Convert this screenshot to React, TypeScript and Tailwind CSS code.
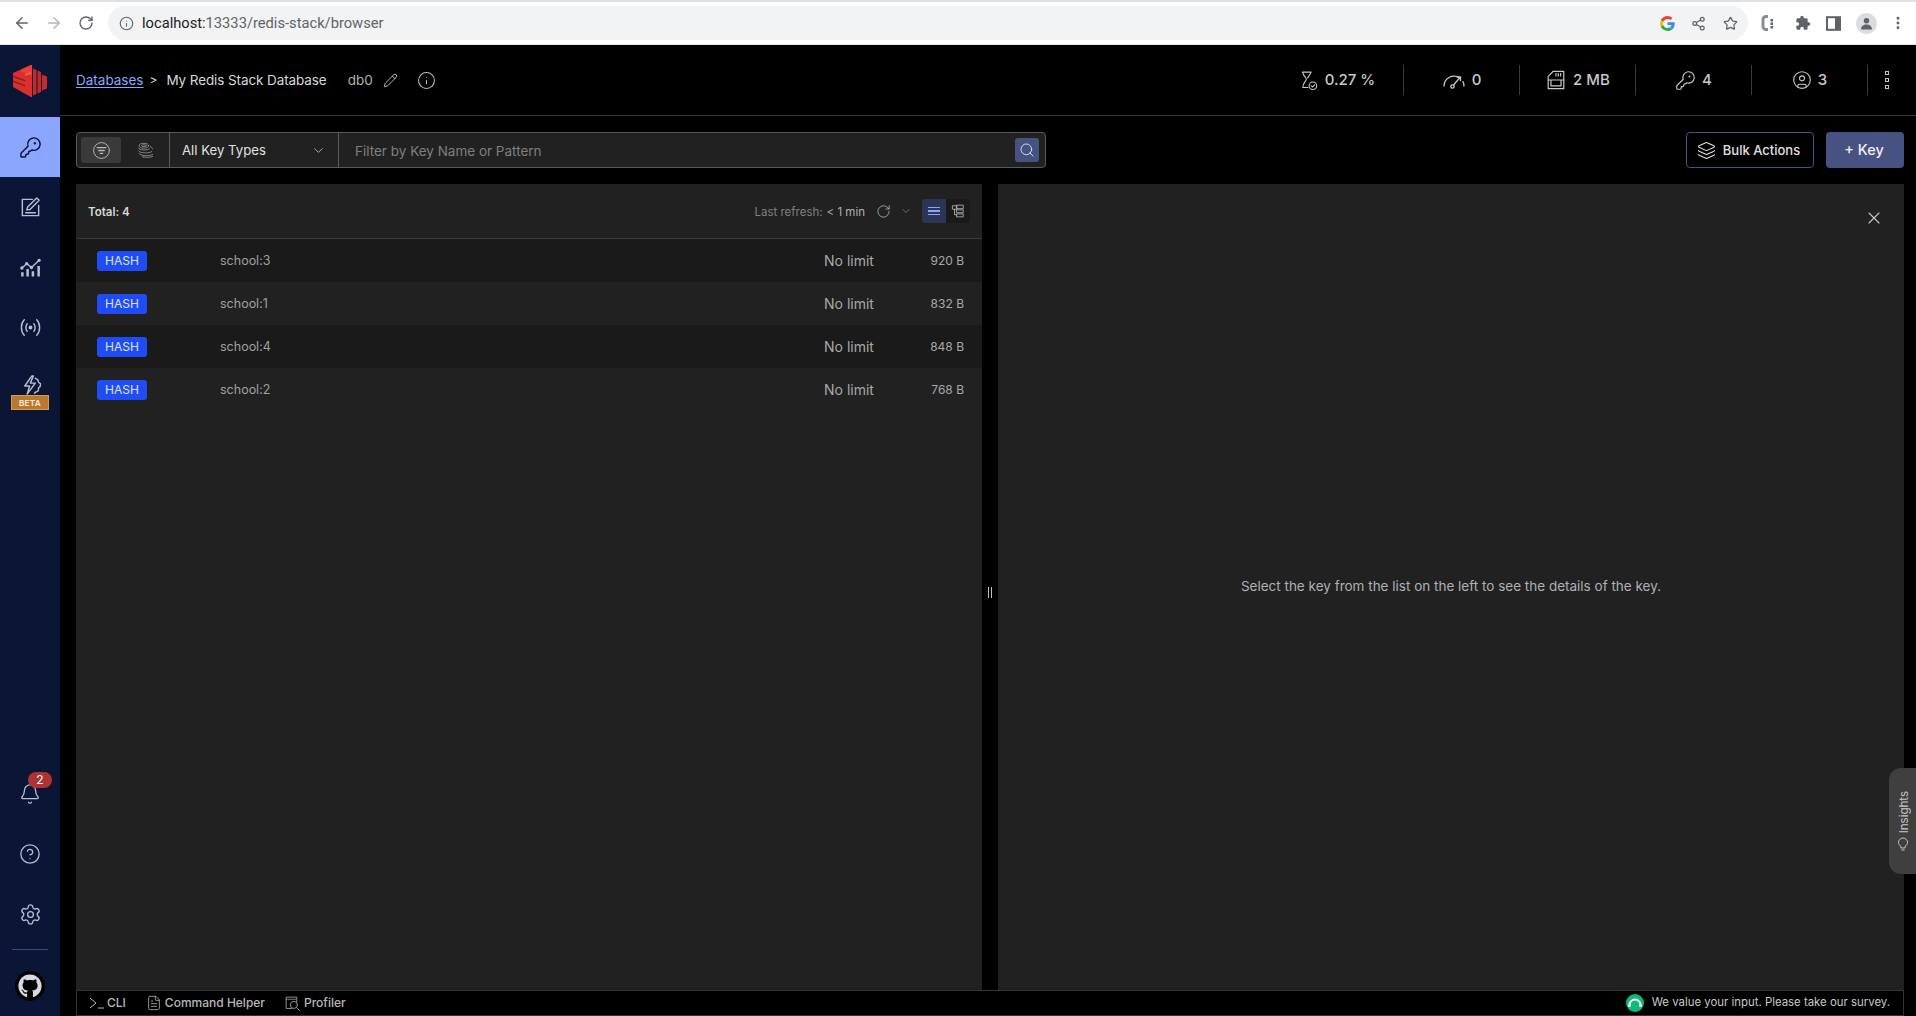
import React from 'react';
import { ArrowLeft, ArrowRight, RotateCw, Info, Share2, Star, EllipsisVertical, KeyRound, Bell, CircleHelp, Settings, Layers, Search, ChevronDown, X, FileText, CircleUser, Pencil } from 'lucide-react';
import { FaGithub } from 'react-icons/fa';

function Ico({ s = 20, children, className = '' }: { s?: number; children: React.ReactNode; className?: string }) {
  return (
    <svg width={s} height={s} viewBox="0 0 24 24" fill="none" stroke="currentColor" strokeWidth={1.5} strokeLinecap="round" strokeLinejoin="round" className={className}>
      {children}
    </svg>
  );
}

function RedisLogo() {
  return (
    <svg width="34" height="32" viewBox="0 0 34 32">
      <polygon points="0,8 18,0 19,0 19,32 18,32 0,22" fill="#d9302f" />
      <polygon points="8,4.500 18,0 19,0 19,11 8,6.500" fill="#e8403c" />
      <polygon points="20,3.500 23.500,5 23.500,29 20,30.500" fill="#c62b2b" />
      <polygon points="24.500,5.500 28,7 28,27 24.500,28.500" fill="#c62b2b" />
      <polygon points="29,9.500 34,11.500 34,23.500 29,25.500" fill="#c62b2b" />
      <polygon points="0,10.500 12,15 12,16.500 0,12" fill="#8a1c1e" />
      <polygon points="0,15.500 12,20 12,21.500 0,17" fill="#8a1c1e" />
      <polygon points="12,9.500 18,7 18,8.500 12,11" fill="#f0605a" />
    </svg>
  );
}

function GoogleG() {
  return (
    <svg width="15" height="15" viewBox="0 0 48 48">
      <path fill="#EA4335" d="M24 9.5c3.54 0 6.71 1.22 9.21 3.6l6.85-6.85C35.9 2.38 30.47 0 24 0 14.62 0 6.51 5.38 2.56 13.22l7.98 6.19C12.43 13.72 17.74 9.5 24 9.5z" />
      <path fill="#4285F4" d="M46.98 24.55c0-1.57-.15-3.09-.38-4.55H24v9.02h12.94c-.58 2.96-2.26 5.48-4.78 7.18l7.73 6c4.51-4.18 7.09-10.36 7.09-17.65z" />
      <path fill="#FBBC05" d="M10.53 28.59c-.48-1.45-.76-2.99-.76-4.59s.27-3.14.76-4.59l-7.98-6.19C.92 16.46 0 20.12 0 24c0 3.88.92 7.54 2.56 10.78l7.97-6.19z" />
      <path fill="#34A853" d="M24 48c6.48 0 11.93-2.13 15.89-5.81l-7.73-6c-2.15 1.45-4.92 2.3-8.16 2.3-6.26 0-11.57-4.22-13.47-9.91l-7.98 6.19C6.51 42.62 14.62 48 24 48z" />
    </svg>
  );
}

function Chrome() {
  return (
    <div className="h-[45px] shrink-0 bg-white border-t-2 border-b border-t-[#dee1e6] border-b-[#e5e5e5] flex items-center pl-[13px] pr-[10px] text-[#5f6368] font-['Roboto',sans-serif]">
      <ArrowLeft size={18} strokeWidth={2} />
      <ArrowRight size={18} strokeWidth={2} className="ml-[14px] text-[#b4b6b9]" />
      <RotateCw size={16} strokeWidth={2} className="ml-[15px]" />
      <div className="ml-[14px] h-[34px] w-[1640px] rounded-full bg-[#f1f3f4] flex items-center pl-[11px] pr-[10px]">
        <Info size={15} strokeWidth={1.8} />
        <div className="ml-[8px] text-[14.700px] text-[#5f6368]"><span className="text-[#202124]">localhost:</span>13333/redis-stack/browser</div>
        <div className="flex-1" />
        <GoogleG />
        <Share2 size={15} strokeWidth={2} className="ml-[16px]" />
        <Star size={15} strokeWidth={2} className="ml-[17px]" />
      </div>
      <svg width="14" height="18" viewBox="0 0 14 18" className="ml-[12px]" fill="none">
        <path d="M8 2.500H6a3 3 0 0 0-3 3v7a3 3 0 0 0 3 3h2" stroke="#8a8d91" strokeWidth="3" />
        <rect x="10.500" y="5" width="2.500" height="2.500" fill="#5f6368" />
        <rect x="10.500" y="8.500" width="2.500" height="2.500" fill="#5f6368" />
        <rect x="10.500" y="12" width="2.500" height="2.500" fill="#5f6368" />
      </svg>
      <svg width="16" height="16" viewBox="0 0 24 24" className="ml-[21px]" fill="#5f6368"><path d="M20.5 11H19V7a2 2 0 0 0-2-2h-4V3.5a2.5 2.5 0 0 0-5 0V5H4a2 2 0 0 0-2 2v3.8h1.5a2.7 2.7 0 0 1 0 5.4H2V20a2 2 0 0 0 2 2h3.8v-1.5a2.7 2.7 0 0 1 5.4 0V22H17a2 2 0 0 0 2-2v-4h1.5a2.5 2.5 0 0 0 0-5z" /></svg>
      <svg width="15" height="15" viewBox="0 0 15 15" className="ml-[15px]"><rect x="1" y="1.2" width="13" height="12.6" fill="none" stroke="#5f6368" strokeWidth="2" /><rect x="9" y="1" width="5" height="13" fill="#5f6368" /></svg>
      <div className="ml-[15px] w-[21px] h-[21px] rounded-full bg-[#dadce0] flex items-center justify-center">
        <svg width="13" height="13" viewBox="0 0 24 24" fill="#5f6368"><circle cx="12" cy="7" r="5" /><path d="M2 23c0-6 4-9 10-9s10 3 10 9z" /></svg>
      </div>
      <EllipsisVertical size={16} strokeWidth={2.4} className="ml-[13px]" />
    </div>
  );
}

const navCls = 'h-[60px] w-[60px] flex items-center justify-center text-[#b9bfd2]';

function Sidebar() {
  return (
    <div className="w-[60px] shrink-0 bg-[#0b1536] flex flex-col">
      <div className="h-[72px] flex items-center justify-center"><RedisLogo /></div>
      <div className="h-[60px] w-[60px] bg-[#8ba6ff] flex items-center justify-center text-[#0b1536]">
        <KeyRound size={23} strokeWidth={1.5} />
      </div>
      <div className={navCls}>
        <Ico s={23}>
          <path d="M20.500 10v10.500h-17v-17H14" />
          <path d="M8 14.500l1-3L18.500 2l2.500 2.500-9.500 9.500z" />
          <path d="M7 17.500h10" />
        </Ico>
      </div>
      <div className={navCls}>
        <Ico s={23}>
          <path d="M3 12.500l5-4.500 5 4L21 4.500" />
          <circle cx="3" cy="12.500" r="1" fill="currentColor" />
          <circle cx="8" cy="8" r="1" fill="currentColor" />
          <circle cx="13" cy="12" r="1" fill="currentColor" />
          <circle cx="21" cy="4.500" r="1" fill="currentColor" />
          <path d="M3.500 17v4.500M9 13.500v8M14.500 16v5.500M20.500 10.500v11" strokeWidth={2.600} strokeLinecap="butt" />
        </Ico>
      </div>
      <div className={navCls}>
        <Ico s={23}>
          <circle cx="12" cy="12" r="1.300" fill="currentColor" />
          <path d="M5.500 4C1.500 8 1.500 16 5.500 20M18.500 4C22.500 8 22.500 16 18.500 20" />
          <path d="M8.500 8C6.800 10 6.800 14 8.500 16M15.500 8C17.200 10 17.200 14 15.500 16" />
        </Ico>
      </div>
      <div className={`${navCls} relative`}>
        <Ico s={23} className="-mt-[3px]">
          <path d="M13.500 2L6 12.500h5L8.500 21 17 9.500h-5.200L15 2z" />
          <path d="M17 4.500l2.500 1.200 1 3 2 1.500-.5 3-1.600 1.500-.4 3-2.500 1.200-2 1.600" strokeDasharray="2 1.200" />
        </Ico>
        <div className="absolute left-[11px] top-[38px] w-[38px] h-[15px] bg-[#b87a30] border border-[#dd9a45] flex items-center justify-center text-[8px] font-bold text-[#f5e6d0] tracking-[0.3px]">BETA</div>
      </div>
      <div className="flex-1" />
      <div className={`${navCls} relative`}>
        <Bell size={22} strokeWidth={1.4} />
        <div className="absolute left-[28px] top-[8px] w-[24px] h-[16px] rounded-full bg-[#b03232] text-white text-[12px] leading-[16px] text-center">2</div>
      </div>
      <div className={navCls}><CircleHelp size={22} strokeWidth={1.4} /></div>
      <div className={navCls}><Settings size={23} strokeWidth={1.4} /></div>
      <div className="mx-[12px] mt-[5px] h-px bg-[#3b4a7a]" />
      <div className="mt-[21px] mb-[15px] mx-[15px] w-[30px] h-[30px] rounded-full bg-black flex items-center justify-center text-[#d5d9e5]">
        <FaGithub size={24} />
      </div>
    </div>
  );
}

function Stat({ icon, text, w = 'w-[116px]' }: { icon: React.ReactNode; text: string; w?: string }) {
  return (
    <div className={`${w} h-[30px] border-r border-[#3a3a3a] flex items-center justify-center gap-[6px] text-[#c8c8c8] text-[15px] font-medium`}>
      {icon}
      <span>{text}</span>
    </div>
  );
}

function Header() {
  return (
    <div className="h-[71px] shrink-0 border-b border-[#3a3a3a] flex items-center pl-[16px] text-[13.500px] text-[#d8d8d8]">
      <span className="text-[#8ba6ff] underline underline-offset-2">Databases</span>
      <span className="ml-[6px] text-[12px]">&gt;</span>
      <span className="ml-[9px] tracking-[-0.1px]">My Redis Stack Database</span>
      <span className="ml-[21px] text-[#b0b0b0]">db0</span>
      <Pencil size={15} strokeWidth={1.5} className="ml-[10px] text-[#c0c0c0]" />
      <Info size={19} strokeWidth={1.3} className="ml-[19px] text-[#c0c0c0]" />
      <div className="flex-1" />
      <Stat w="w-[134px]" text="0.27 %" icon={
        <Ico s={21}>
          <path d="M5 2.500h10M5.500 2.500c0 4 4 5.500 4 8s-4 4-4 9.500h6M14.500 2.500c0 3-2.500 4.500-3.500 6.500" strokeWidth={1.300} />
          <circle cx="17" cy="18" r="4.300" strokeWidth={1.300} />
          <path d="M15 18l1.500 1.500 2.500-2.500" strokeWidth={1.200} />
        </Ico>
      } />
      <Stat text="0" icon={
        <Ico s={24}>
          <path d="M2 18a10 10 0 0 1 15-8.500" strokeWidth={1.300} />
          <path d="M22 18c0-1.500-.4-3-1-4.300" strokeWidth={1.300} />
          <circle cx="10.500" cy="18.500" r="1.700" strokeWidth={1.300} />
          <path d="M11.500 17L18 9.500M15 9h3.500v3.500" strokeWidth={1.300} />
        </Ico>
      } />
      <Stat text="2 MB" icon={
        <Ico s={22}>
          <path d="M9 2.500h11.500v19h-17V8z" strokeWidth={1.300} />
          <path d="M12 5v2.500M14.500 5v2.500M17 5v2.500" strokeWidth={1.300} />
          <path d="M3.500 12h17M6.500 12v6.500h11V12" strokeWidth={1.300} />
        </Ico>
      } />
      <Stat text="4" icon={<KeyRound size={21} strokeWidth={1.3} />} />
      <Stat text="3" icon={<CircleUser size={20} strokeWidth={1.3} />} />
      <div className="w-[48px] flex flex-col gap-[3px] pl-[17px]">
        <span className="w-[4px] h-[4px] border border-[#c8c8c8]" />
        <span className="w-[4px] h-[4px] border border-[#c8c8c8]" />
        <span className="w-[4px] h-[4px] border border-[#c8c8c8]" />
      </div>
    </div>
  );
}

function Toolbar() {
  return (
    <div className="h-[36px] mt-[16px] shrink-0 flex pl-[16px] pr-[12px]">
      <div className="w-[970px] h-[36px] rounded-[4px] border border-[#5a5a5a] bg-[#212121] flex items-stretch text-[13.500px]">
        <div className="w-[93px] border-r border-[#5a5a5a] flex items-center pl-[4px]">
          <div className="w-[40px] h-[26px] rounded-[3px] bg-[#3a3a3a] flex items-center justify-center text-[#b8b8b8]">
            <Ico s={19}>
              <circle cx="12" cy="12" r="10" strokeWidth={1.200} />
              <path d="M6.500 8.500h11M8.500 12h7M10.500 15.500h3" strokeWidth={1.600} />
            </Ico>
          </div>
          <div className="ml-[4px] w-[40px] flex items-center justify-center text-[#9a9a9a]">
            <Ico s={19}>
              <ellipse cx="10" cy="6" rx="6" ry="3" strokeWidth={1} />
              <ellipse cx="10" cy="6" rx="3" ry="1.300" strokeWidth={1} />
              <path d="M3 9c1 3 11 3 14 1M3 12.500c1 3 13 3.500 17 1M4 16c1 3 13 3.500 17 1M8 20c3 1 10 1 13-.5M18 7c2 1 3 2 3 3" strokeWidth={1} />
            </Ico>
          </div>
        </div>
        <div className="w-[169px] border-r border-[#5a5a5a] flex items-center justify-between pl-[12px] pr-[12px] text-[13.200px] text-[#e0e0e0]">
          <span className="pt-[1px]">All Key Types</span>
          <ChevronDown size={15} strokeWidth={1.4} className="text-[#b8b8b8]" />
        </div>
        <div className="flex-1 flex items-center justify-between pl-[16px] pr-[6px]">
          <span className="pt-[2px] text-[#7f7f7f]">Filter by Key Name or Pattern</span>
          <div className="w-[24px] h-[24px] rounded-[3px] bg-[#465282] flex items-center justify-center text-[#e0e4f2]">
            <Search size={16} strokeWidth={1.4} />
          </div>
        </div>
      </div>
      <div className="flex-1" />
      <div className="w-[128px] h-[36px] rounded-[4px] border border-[#465282] flex items-center justify-center gap-[7px] pr-[3px] text-[13px] font-medium text-[#e0e0e0]">
        <Layers size={19} strokeWidth={1.3} />
        <span className="pt-[1px]">Bulk Actions</span>
      </div>
      <div className="ml-[12px] w-[78px] h-[36px] rounded-[4px] bg-[#465282] flex items-center justify-center pr-[2px] text-[14.500px] font-medium text-[#f0f0f0]">+ Key</div>
    </div>
  );
}

const rows = [
  { name: 'school:3', size: '920 B', dark: true },
  { name: 'school:1', size: '832 B', dark: false },
  { name: 'school:4', size: '848 B', dark: true },
  { name: 'school:2', size: '768 B', dark: false },
];

function KeyList() {
  return (
    <div className="w-[906px] shrink-0 bg-[#212121] flex flex-col">
      <div className="h-[55px] shrink-0 border-b border-[#3a3a3a] flex items-center pl-[12px] pr-[12px]">
        <span className="pt-[3px] text-[11.500px] font-semibold text-[#d8d8d8]">Total: 4</span>
        <div className="flex-1" />
        <span className="pt-[3px] text-[11.500px] text-[#808080]">Last refresh:</span>
        <span className="pt-[3px] ml-[4px] text-[11.500px] text-[#b0b0b0]">&lt; 1 min</span>
        <RotateCw size={15} strokeWidth={1.3} className="ml-[11px] text-[#b8b8b8]" />
        <ChevronDown size={12} strokeWidth={1.3} className="ml-[9px] text-[#909090]" />
        <div className="ml-[10px] flex h-[24px]">
          <div className="w-[24px] rounded-l-[3px] bg-[#2c3556] flex flex-col items-center justify-center gap-[2px]">
            <span className="w-[12px] h-[1.500px] bg-[#8ba6ff]" />
            <span className="w-[12px] h-[1.500px] bg-[#8ba6ff]" />
            <span className="w-[12px] h-[1.500px] bg-[#8ba6ff]" />
          </div>
          <div className="w-[24px] rounded-r-[3px] bg-[#1a1a1a] flex items-center justify-center text-[#b0b0b0]">
            <Ico s={14}>
              <rect x="3" y="3" width="7" height="6" strokeWidth={1.500} />
              <rect x="10" y="2" width="11" height="6" strokeWidth={1.500} />
              <rect x="10" y="10" width="11" height="5" strokeWidth={1.500} />
              <rect x="10" y="17" width="11" height="5" strokeWidth={1.500} />
              <path d="M6 9v9.500h4" strokeWidth={1.500} />
            </Ico>
          </div>
        </div>
      </div>
      {rows.map((r) => (
        <div key={r.name} className={`h-[43px] flex items-center pl-[21px] pr-[18px] ${r.dark ? 'bg-[#1a1a1a]' : 'bg-[#212121]'}`}>
          <div className="w-[50px] h-[20px] rounded-[3px] bg-[#1f4cf4] text-[12px] leading-[20px] text-center text-[#dfe6ff]">HASH</div>
          <div className="ml-[73px] flex-1 pt-[1px] text-[12.500px] text-[#a0a0a0]">{r.name}</div>
          <div className="w-[140px] flex items-center justify-between">
            <span className="text-[14px] text-[#a8a8a8]">No limit</span>
            <span className="text-[12px] text-[#a8a8a8]">{r.size}</span>
          </div>
        </div>
      ))}
    </div>
  );
}

function Details() {
  return (
    <div className="flex-1 relative bg-[#212121] flex items-center justify-center text-[13.500px] text-[#b0b0b6] pb-[2px]">
      <X size={20} strokeWidth={1.3} className="absolute right-[20px] top-[24px] text-[#c8c8c8]" />
      Select the key from the list on the left to see the details of the key.
    </div>
  );
}

function BottomBar() {
  return (
    <div className="h-[26px] shrink-0 ml-[16px] mr-[12px] border border-[#333] bg-black flex items-center pl-[12px] pr-[13px] text-[12px] font-medium text-[#b8b8b8]">
      <svg width="15" height="14" viewBox="0 0 15 14" fill="none" stroke="#b8b8b8" strokeWidth="1"><path d="M1 2l6 5-6 5" /><path d="M9 12h6" /></svg>
      <span className="ml-[3px]">CLI</span>
      <FileText size={16} strokeWidth={1.2} className="ml-[20px]" />
      <span className="ml-[3px]">Command Helper</span>
      <Ico s={17} className="ml-[19px]">
        <path d="M11 19H3V3h15v7" strokeWidth={1.100} />
        <path d="M3 6h15" strokeWidth={1.100} strokeDasharray="1.500 1.500" />
        <circle cx="14" cy="14" r="5" strokeWidth={1.100} />
        <path d="M18 18l4 4" strokeWidth={1.100} />
      </Ico>
      <span className="ml-[3px]">Profiler</span>
      <div className="flex-1" />
      <svg width="18" height="18" viewBox="0 0 18 18">
        <circle cx="9" cy="9" r="9" fill="#0fba7a" />
        <path d="M3.500 11a5.500 5.500 0 0 1 11 0" fill="none" stroke="#fff" strokeWidth="1.800" />
        <circle cx="3.500" cy="11.500" r="1.500" fill="#fff" />
        <circle cx="14.500" cy="11.500" r="1.500" fill="#fff" />
      </svg>
      <span className="ml-[8px] font-normal text-[11.400px] text-[#c8c8c8]">We value your input. Please take our survey.</span>
    </div>
  );
}

export default function App() {
  return (
    <div className="h-screen w-full flex flex-col overflow-hidden bg-black font-['Inter',sans-serif] relative">
      <Chrome />
      <div className="flex-1 min-h-0 flex">
        <Sidebar />
        <div className="flex-1 min-w-0 flex flex-col">
          <Header />
          <Toolbar />
          <div className="flex-1 min-h-0 mt-[16px] flex pl-[16px] pr-[12px]">
            <KeyList />
            <div className="w-[16px] shrink-0 flex items-center justify-center gap-[2px] pt-[10px]">
              <span className="w-px h-[11px] bg-[#c0c0c0]" />
              <span className="w-px h-[11px] bg-[#c0c0c0]" />
            </div>
            <Details />
          </div>
          <BottomBar />
        </div>
      </div>
      <div className="absolute right-0 top-[768px] w-[27px] h-[106px] rounded-l-[12px] bg-[#3f3f3f] flex flex-col items-center justify-center gap-[3px] text-[#c8c8c8]">
        <span className="shrink-0 ml-[3px] text-[11.500px] leading-[16px] [writing-mode:vertical-rl] rotate-180">Insights</span>
        <svg width="12" height="14" viewBox="0 0 12 14" fill="none" stroke="currentColor" strokeWidth="1" className="shrink-0">
          <path d="M4 9.500C2.500 8.500 1.500 7 1.500 5.500a4.500 4.500 0 0 1 9 0c0 1.500-1 3-2.500 4v1.500H4z" />
          <path d="M4.500 13h3" />
        </svg>
      </div>
    </div>
  );
}
